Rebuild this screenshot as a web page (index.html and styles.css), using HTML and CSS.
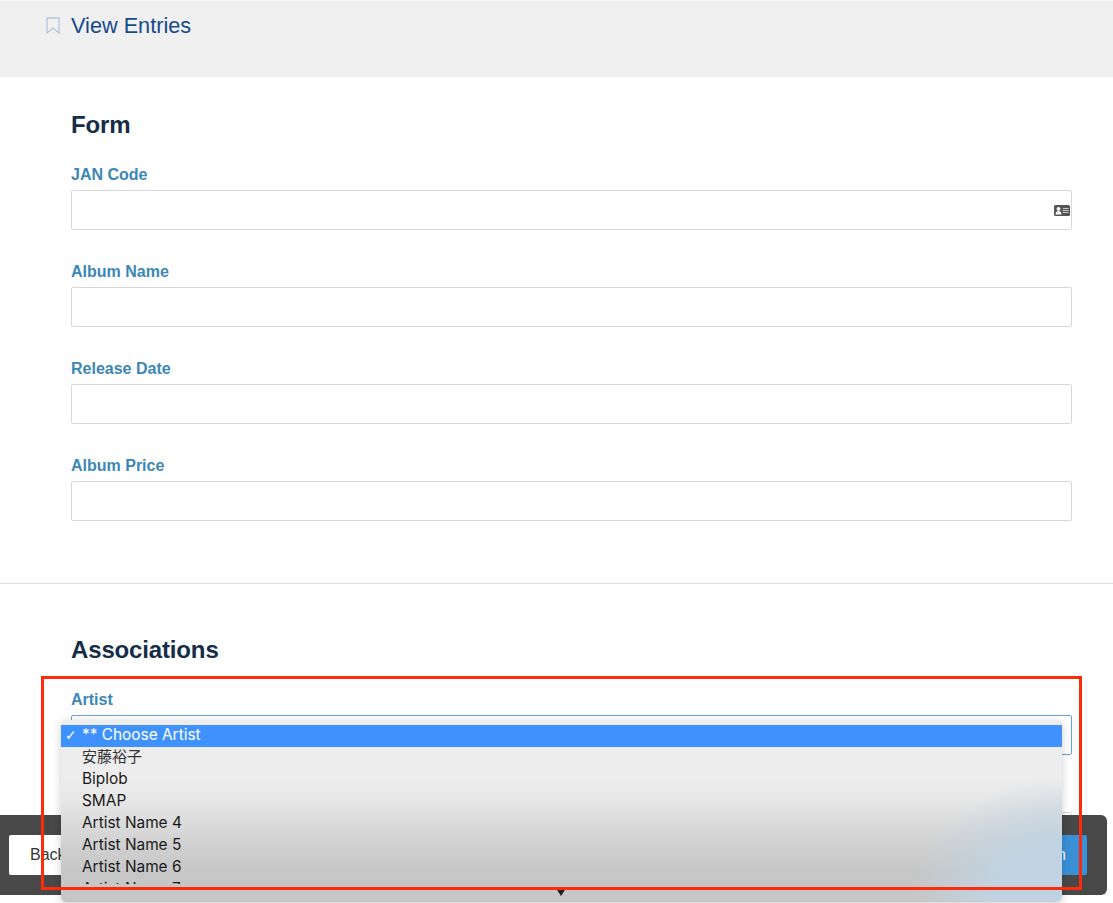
FILE: index.html
```html
<!DOCTYPE html>
<html>
<head>
  <title>Album Form</title>
  <link rel="stylesheet" href="styles.css">
</head>
<body>
  <div class="top-bar">
    <svg class="bookmark" width="14" height="17" viewBox="0 0 14 17">
      <path d="M1 1H13V16L7 11L1 16Z" fill="none" stroke="#b4c6dc" stroke-width="1.3"/>
    </svg>
    <a class="top-link" href="#">View Entries</a>
  </div>

  <!-- Form -->
  <div class="section form-section">
    <h2>Form</h2>
    <div class="form-group">
      <label>JAN Code</label>
      <div class="input-box">
        <svg class="card-icon" width="16" height="11" viewBox="0 0 16 11">
          <rect x="0" y="0" width="16" height="11" rx="1.5" fill="#555"/>
          <circle cx="4.5" cy="3.8" r="1.9" fill="#fff"/>
          <path d="M1.6 9.4C1.6 7 2.8 6 4.5 6S7.4 7 7.4 9.4Z" fill="#fff"/>
          <path d="M8.8 3H14.6V4H8.8ZM8.8 5H14.6V6H8.8ZM8.8 7H14.6V8H8.8Z" fill="#c8c8c8"/>
        </svg>
      </div>
    </div>
    <div class="form-group">
      <label>Album Name</label>
      <div class="input-box"></div>
    </div>
    <div class="form-group">
      <label>Release Date</label>
      <div class="input-box"></div>
    </div>
    <div class="form-group">
      <label>Album Price</label>
      <div class="input-box"></div>
    </div>
  </div>

  <!-- Associations -->
  <div class="section assoc-section">
    <h2>Associations</h2>
    <div class="form-group">
      <label>Artist</label>
      <div class="input-box focused"></div>
    </div>
    <div class="form-group">
      <label>Label</label>
      <div class="input-box"></div>
    </div>
  </div>

  <!-- Save bar -->
  <div class="save-bar">
    <a class="btn btn-back" href="#">Back</a>
    <a class="btn btn-save" href="#">Save and Return</a>
  </div>

  <!-- Native select menu -->
  <div class="select-menu">
    <div class="menu-list">
      <div class="menu-item selected"><span class="check">&#10003;</span>** Choose Artist</div>
      <div class="menu-item cjk">安藤裕子</div>
      <div class="menu-item">Biplob</div>
      <div class="menu-item">SMAP</div>
      <div class="menu-item">Artist Name 4</div>
      <div class="menu-item">Artist Name 5</div>
      <div class="menu-item">Artist Name 6</div>
      <div class="menu-item">Artist Name 7</div>
    </div>
    <div class="menu-arrow"></div>
  </div>

  <div class="highlight-box"></div>
</body>
</html>
```

FILE: styles.css
```css
html,
body {
  height: 903px;
  overflow: hidden;
}

body {
  position: relative;
  margin: 0;
  background-color: #fff;
  font-family: "Liberation Sans", Arial, sans-serif;
  color: #333;
}

.top-bar {
  display: flex;
  align-items: flex-start;
  height: 77px;
  padding-left: 46px;
  box-sizing: border-box;
  background-color: #f0f0f1;
  border-top: 1px solid #f6f6f6;
}

.bookmark {
  margin-top: 16px;
  margin-right: 11px;
}

.top-link {
  margin-top: 13px;
  font-size: 21.7px;
  line-height: 24px;
  color: #164a8a;
  text-decoration: none;
}

.section {
  padding-left: 71px;
  padding-right: 41px;
}

.form-section {
  height: 507px;
  box-sizing: border-box;
  padding-top: 34px;
  border-bottom: 1px solid #ddd;
}

.assoc-section {
  padding-top: 52px;
}

h2 {
  margin: 0 0 26px 0;
  font-size: 24px;
  line-height: 28px;
  font-weight: bold;
  letter-spacing: -0.15px;
  color: #152d47;
}

.form-group {
  margin-bottom: 32px;
}

label {
  display: block;
  margin-bottom: 5px;
  font-size: 16px;
  line-height: 20px;
  font-weight: bold;
  color: #3b87b8;
}

.input-box {
  position: relative;
  height: 40px;
  box-sizing: border-box;
  background-color: #fff;
  border: 1px solid #d8d8d8;
  border-radius: 2px;
}

.input-box.focused {
  border-color: #66a3de;
}

.card-icon {
  position: absolute;
  top: 14px;
  right: 1px;
}

.save-bar {
  position: absolute;
  left: 0;
  top: 815px;
  width: 1107px;
  height: 80px;
  box-sizing: border-box;
  padding: 20px 20px 20px 9px;
  display: flex;
  justify-content: space-between;
  background-color: #484848;
  border-radius: 0 6px 6px 0;
}

.btn {
  height: 40px;
  line-height: 40px;
  font-size: 16px;
  border-radius: 2px;
  text-decoration: none;
}

.btn-back {
  padding: 0 21px;
  background-color: #fff;
  color: #333;
}

.btn-save {
  padding: 0 21px;
  background-color: #3a90d6;
  color: #fff;
}

.select-menu {
  position: absolute;
  left: 61px;
  top: 720px;
  width: 1001px;
  height: 182px;
  box-sizing: border-box;
  padding-top: 5px;
  border-radius: 5px;
  background:
    radial-gradient(ellipse 150px 125px at 100% 100%, rgb(193, 211, 226) 0%, rgb(193, 211, 226) 45%, rgba(193, 211, 226, 0) 100%),
    linear-gradient(to bottom, #ededed 0%, #ededed 33%, #e6e6e6 45%, #cfcfcf 70%, #c6c6c6 85%, #c6c6c6 100%);
  box-shadow: 0 2px 8px rgba(0, 0, 0, 0.2);
}

.menu-list {
  height: 159px;
  overflow: hidden;
}

.menu-item {
  height: 22px;
  line-height: 20px;
  padding-left: 21px;
  font-family: Inter, "Noto Sans CJK JP", sans-serif;
  font-size: 15.4px;
  color: #1a1a1a;
  position: relative;
}

.menu-item.cjk {
  font-family: "Noto Sans CJK JP", sans-serif;
  font-size: 15px;
  line-height: 18px;
  color: #333;
}

.menu-item.selected {
  background-color: #3f92fd;
  color: #fff;
}

.check {
  position: absolute;
  left: 4px;
  font-family: "DejaVu Sans", sans-serif;
  font-size: 14px;
  font-weight: bold;
}

.menu-arrow {
  position: absolute;
  left: 496px;
  top: 170px;
  width: 0;
  height: 0;
  border-left: 4px solid transparent;
  border-right: 4px solid transparent;
  border-top: 6px solid #222;
}

.highlight-box {
  position: absolute;
  left: 41px;
  top: 676px;
  width: 1041px;
  height: 214px;
  box-sizing: border-box;
  border: 3px solid #fb2c0c;
}
```
